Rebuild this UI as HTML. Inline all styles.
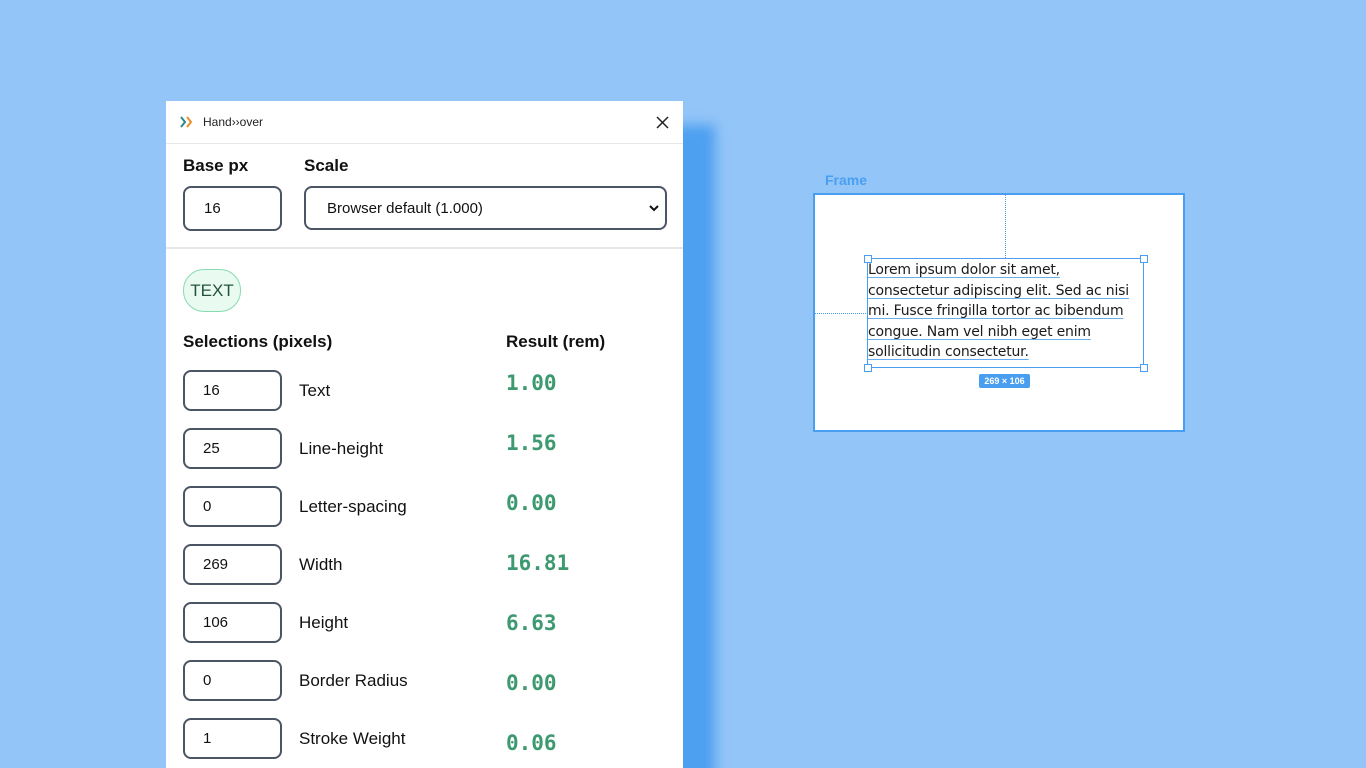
<!DOCTYPE html>
<html><head><style>
html,body{margin:0;width:1366px;height:768px;overflow:hidden;}
body{background:#93c5f8;position:relative;font-family:"Liberation Sans",sans-serif;}
.shadow{position:absolute;left:660px;top:125px;width:55px;height:660px;background:#4d9ff0;filter:blur(6px);}
.panel{position:absolute;left:166px;top:101px;width:517px;height:667px;background:#fff;overflow:hidden;}
.hdr{height:42px;border-bottom:1px solid #e5e7eb;position:relative;}
.abs{position:absolute;}
.lbl{font-weight:bold;font-size:17px;color:#111;}
.inp{position:absolute;border:2px solid #4b5563;border-radius:8px;box-sizing:border-box;font-size:15px;color:#111;padding-left:18px;display:flex;align-items:center;}
.name{position:absolute;left:133px;font-size:17px;color:#111;}
.res{position:absolute;left:340px;font-family:"DejaVu Sans Mono",monospace;font-weight:bold;font-size:21px;color:#3d9970;}
</style></head><body>
<div class="shadow"></div>
<div class="panel">
 <div class="hdr">
  <svg class="abs" style="left:14px;top:15px" width="14" height="12" viewBox="0 0 14 12"><path d="M1 1l4 5-4 5" stroke="#2a8a8a" stroke-width="2" fill="none"/><path d="M7 1l4 5-4 5" stroke="#e8902a" stroke-width="2" fill="none"/></svg>
  <div class="abs" style="left:37px;top:14px;font-size:12px;color:#222">Hand››over</div>
  <svg class="abs" style="left:490px;top:15px" width="13" height="13" viewBox="0 0 13 13"><path d="M1 1L12 12M12 1L1 12" stroke="#222" stroke-width="1.5"/></svg>
 </div>
 <div class="abs lbl" style="left:17px;top:55px">Base px</div>
 <div class="abs lbl" style="left:138px;top:55px">Scale</div>
 <div class="inp" style="left:17px;top:85px;width:99px;height:45px;padding-left:19px">16</div>
 <div class="inp" style="left:138px;top:85px;width:363px;height:44px;padding-left:21px">Browser default (1.000)
  <svg class="abs" style="right:6px;top:16px" width="10" height="8" viewBox="0 0 10 8"><path d="M1 2l4 4 4-4" stroke="#111" stroke-width="2" fill="none"/></svg></div>
 <div class="abs" style="left:0;top:146px;width:517px;height:2px;background:#e5e7eb"></div>
 <div class="abs" style="left:17px;top:168px;width:58px;height:43px;border:1px solid #86dcb0;background:#e9faf1;border-radius:21px;box-sizing:border-box;display:flex;align-items:center;justify-content:center;font-size:17px;color:#24523c">TEXT</div>
 <div class="abs lbl" style="left:17px;top:231px">Selections (pixels)</div>
 <div class="abs lbl" style="left:340px;top:231px">Result (rem)</div>

 <div class="inp" style="left:17px;top:269px;width:99px;height:41px">16</div><div class="name" style="top:280px">Text</div><div class="res" style="top:270px">1.00</div>
 <div class="inp" style="left:17px;top:327px;width:99px;height:41px">25</div><div class="name" style="top:338px">Line-height</div><div class="res" style="top:330px">1.56</div>
 <div class="inp" style="left:17px;top:385px;width:99px;height:41px">0</div><div class="name" style="top:396px">Letter-spacing</div><div class="res" style="top:390px">0.00</div>
 <div class="inp" style="left:17px;top:443px;width:99px;height:41px">269</div><div class="name" style="top:454px">Width</div><div class="res" style="top:450px">16.81</div>
 <div class="inp" style="left:17px;top:501px;width:99px;height:41px">106</div><div class="name" style="top:512px">Height</div><div class="res" style="top:510px">6.63</div>
 <div class="inp" style="left:17px;top:559px;width:99px;height:41px">0</div><div class="name" style="top:570px">Border Radius</div><div class="res" style="top:570px">0.00</div>
 <div class="inp" style="left:17px;top:617px;width:99px;height:41px">1</div><div class="name" style="top:628px">Stroke Weight</div><div class="res" style="top:630px">0.06</div>
</div>

<div class="abs" style="left:825px;top:172px;font-size:14px;font-weight:bold;color:#4a9ef0">Frame</div>
<div class="abs" style="left:813px;top:193px;width:372px;height:239px;border:2px solid #4a9ef0;box-sizing:border-box;background:#fff"></div>
<div class="abs" style="left:1005px;top:195px;height:63px;border-left:1px dotted #4a9ef0"></div>
<div class="abs" style="left:815px;top:313px;width:53px;border-top:1px dotted #4a9ef0"></div>
<div class="abs" style="left:867px;top:258px;width:277px;height:110px;border:1px solid #4a9ef0;box-sizing:border-box"></div>
<div class="abs" style="left:864px;top:255px;width:6px;height:6px;border:1px solid #4a9ef0;background:#fff"></div>
<div class="abs" style="left:1140px;top:255px;width:6px;height:6px;border:1px solid #4a9ef0;background:#fff"></div>
<div class="abs" style="left:864px;top:364px;width:6px;height:6px;border:1px solid #4a9ef0;background:#fff"></div>
<div class="abs" style="left:1140px;top:364px;width:6px;height:6px;border:1px solid #4a9ef0;background:#fff"></div>
<div class="abs" style="left:868px;top:260px;width:276px;line-height:20.5px;color:#1a1a1a;font-family:'DejaVu Sans',sans-serif;font-size:14px;letter-spacing:-0.2px"><span style="text-decoration:underline;text-decoration-color:#6aaef0;text-underline-offset:3px">Lorem ipsum dolor sit amet, consectetur adipiscing elit. Sed ac nisi mi. Fusce fringilla tortor ac bibendum congue. Nam vel nibh eget enim sollicitudin consectetur.</span></div>
<div class="abs" style="left:979px;top:374px;width:51px;height:14px;background:#4a9ef0;border-radius:2px;color:#fff;font-size:9px;font-weight:bold;text-align:center;line-height:14px">269 × 106</div>
</body></html>
